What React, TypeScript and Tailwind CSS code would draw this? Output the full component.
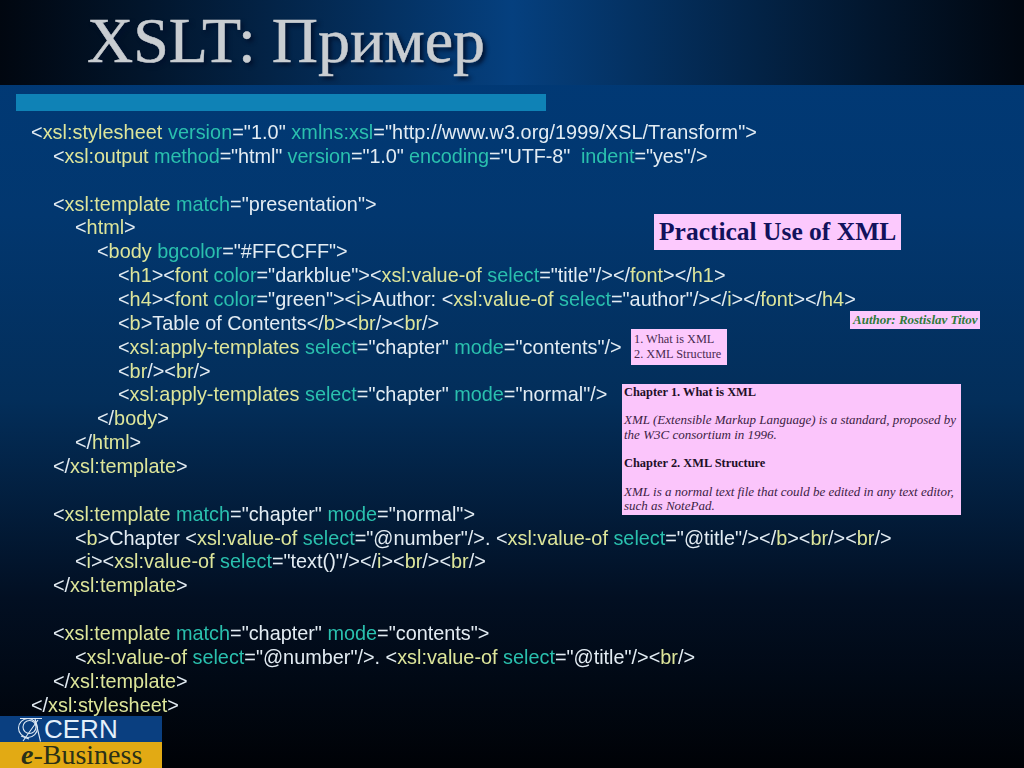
import React from 'react'

// indent level + source text for every line of the slide
const code: [number, string, string?][] = [
  [0, '<xsl:stylesheet version="1.0" xmlns:xsl="http://www.w3.org/1999/XSL/Transform">', 'tracking-[0.045px]'],
  [1, '<xsl:output method="html" version="1.0" encoding="UTF-8"  indent="yes"/>', 'tracking-[-0.09px]'],
  [0, ''],
  [1, '<xsl:template match="presentation">'],
  [2, '<html>'],
  [3, '<body bgcolor="#FFCCFF">'],
  [4, '<h1><font color="darkblue"><xsl:value-of select="title"/></font></h1>'],
  [4, '<h4><font color="green"><i>Author: <xsl:value-of select="author"/></i></font></h4>'],
  [4, '<b>Table of Contents</b><br/><br/>'],
  [4, '<xsl:apply-templates select="chapter" mode="contents"/>'],
  [4, '<br/><br/>'],
  [4, '<xsl:apply-templates select="chapter" mode="normal"/>'],
  [3, '</body>'],
  [2, '</html>'],
  [1, '</xsl:template>'],
  [0, ''],
  [1, '<xsl:template match="chapter" mode="normal">'],
  [2, '<b>Chapter <xsl:value-of select="@number"/>. <xsl:value-of select="@title"/></b><br/><br/>'],
  [2, '<i><xsl:value-of select="text()"/></i><br/><br/>'],
  [1, '</xsl:template>'],
  [0, ''],
  [1, '<xsl:template match="chapter" mode="contents">'],
  [2, '<xsl:value-of select="@number"/>. <xsl:value-of select="@title"/><br/>'],
  [1, '</xsl:template>'],
  [0, '</xsl:stylesheet>'],
]

const indents = ['pl-0', 'pl-[22px]', 'pl-[44px]', 'pl-[66px]', 'pl-[87px]']

function Tag({ src }: { src: string }) {
  const m = src.match(/^(<\/?)([\w:-]+)(.*?)(\/?>)$/)
  if (!m) return <>{src}</>
  const attrs = m[3].split(/(\s+[\w:]+(?==))/)
  return (
    <>
      {m[1]}
      <span className="text-[#dde59a]">{m[2]}</span>
      {attrs.map((a, i) =>
        i % 2 ? <span key={i} className="text-[#2ac0ae]">{a}</span> : <span key={i}>{a}</span>
      )}
      {m[4]}
    </>
  )
}

function CodeLine({ indent, text, extra = '' }: { indent: number; text: string; extra?: string }) {
  const parts = text.split(/(<[^>]+>)/).filter(Boolean)
  return (
    <div className={`h-[23.87px] leading-[23.87px] whitespace-pre ${indents[indent]} ${extra}`}>
      {parts.map((p, i) => (p[0] === '<' ? <Tag key={i} src={p} /> : <span key={i}>{p}</span>))}
    </div>
  )
}

function CernMark() {
  return (
    <svg className="w-[26px] h-[26px] shrink-0" viewBox="0 0 26 26" fill="none" stroke="#dfeaf5" strokeWidth="1.1">
      <circle cx="11" cy="12" r="9.5" />
      <circle cx="12.5" cy="11" r="6.5" />
      <path d="M3 2.5h22M18 2.5l5.5 23M21 4L6 25M4 20l8 3" />
    </svg>
  )
}

export default function App() {
  return (
    <div className="relative w-[1024px] h-[768px] overflow-hidden bg-[linear-gradient(180deg,#003a78_0%,#02376f_28%,#032e5a_52%,#020f22_78%,#000206_100%)] font-['Liberation_Sans',Arial,sans-serif] text-[#e3ecf3]">
      <header className="h-[85px] bg-gradient-to-r from-[#010710] via-[#05407f] to-[#010710] pl-[87px]">
        <h1 className="font-['Liberation_Serif','Times_New_Roman',serif] text-[64px] leading-[81px] text-[#c9cdd1] [-webkit-text-stroke:0.5px_#c9cdd1] [text-shadow:3px_3px_4px_#00102c]">
          XSLT: Пример
        </h1>
      </header>

      <div className="ml-4 mt-[9px] w-[530px] h-[17px] bg-[#0f82b6]" />

      <main className="mt-[10px] h-[595px] pl-[31px] text-[19.85px] blur-[0.3px]">
        {code.map(([indent, text, extra], i) => (
          <CodeLine key={i} indent={indent} text={text} extra={extra} />
        ))}
      </main>

      <footer className="w-[162px]">
        <div className="h-[26px] bg-[#0a3f80] flex items-center pl-[17px] gap-px text-[26px] leading-none text-[#e4f0fb]">
          <CernMark />
          <span>CERN</span>
        </div>
        <div className="h-[26px] bg-[#e2aa14] pl-[21px] font-['Liberation_Serif',serif] text-[28px] leading-[26px] text-[#2a3018]">
          <b><i>e</i></b>-Business
        </div>
      </footer>

      {/* result page cut-outs lying over the slide */}
      <div className="absolute left-[654px] top-[214px] w-[247px] h-[36px] bg-[#fcc9fd] pl-[5px] font-['Liberation_Serif',serif] font-bold text-[25.5px] leading-[36px] text-[#12125c] whitespace-nowrap">
        Practical Use of XML
      </div>
      <div className="absolute left-[850px] top-[311px] w-[130px] h-[18px] bg-[#fcc9fd] pl-[3px] font-['Liberation_Serif',serif] font-bold italic text-[13px] leading-[18px] text-[#2f7a3a] whitespace-nowrap">
        Author: Rostislav Titov
      </div>
      <div className="absolute left-[631px] top-[329px] w-[96px] h-[36px] bg-[#fcc9fd] pl-[3px] pt-[3px] font-['Liberation_Serif',serif] text-[12.3px] leading-[14.5px] text-[#4a2a50] whitespace-nowrap">
        <div>1. What is XML</div>
        <div>2. XML Structure</div>
      </div>
      <div className="absolute left-[622px] top-[384px] w-[339px] h-[131px] bg-[#fbc5fb] pl-[2px] pt-[1px] font-['Liberation_Serif',serif] text-[13px] leading-[14.4px] text-[#3c2244] whitespace-nowrap">
        <div className="font-bold text-[12.4px] text-[#1e1028]">Chapter 1. What is XML</div>
        <div className="mt-[14px] italic">XML (Extensible Markup Language) is a standard, proposed by</div>
        <div className="italic">the W3C consortium in 1996.</div>
        <div className="mt-[14px] font-bold text-[12.4px] text-[#1e1028]">Chapter 2. XML Structure</div>
        <div className="mt-[14px] italic">XML is a normal text file that could be edited in any text editor,</div>
        <div className="italic">such as NotePad.</div>
      </div>
    </div>
  )
}
